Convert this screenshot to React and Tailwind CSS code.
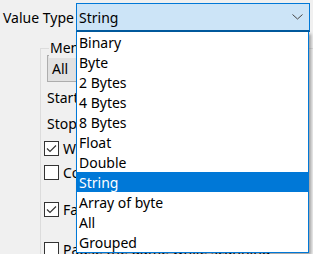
import { useState } from 'react'

const valueTypes = [
  'Binary',
  'Byte',
  '2 Bytes',
  '4 Bytes',
  '8 Bytes',
  'Float',
  'Double',
  'String',
  'Array of byte',
  'All',
  'Grouped',
]

function Check({ checked, label, className = '' }) {
  return (
    <div className={`flex items-center h-[15px] ml-[-3px] ${className}`}>
      <div className="w-[15px] h-[15px] shrink-0 border border-[#333333] bg-white flex items-center justify-center">
        {checked && (
          <svg width="13" height="13" viewBox="0 0 13 13">
            <polyline points="2,6.5 5,9.5 11,3.5" fill="none" stroke="#333333" strokeWidth="1.2" />
          </svg>
        )}
      </div>
      <span className="ml-[4px] whitespace-nowrap leading-[20px]">{label}</span>
    </div>
  )
}

export default function App() {
  const [selected] = useState('String')

  return (
    <div
      className="relative w-[313px] h-[254px] overflow-hidden bg-[#f0f0f0] text-[14px] text-black"
      style={{ fontFamily: '"Noto Sans", "Liberation Sans", sans-serif' }}
    >
      <div className="flex items-center pt-[3px] pl-[3px]">
        <span className="w-[73px] whitespace-nowrap">Value Type</span>
        <div className="w-[234px] h-[29px] flex items-center bg-[#cce4f7] border border-[#0078d7] border-b-2 border-b-[#005a9e] pl-[2px]">
          <span>{selected}</span>
          <svg className="ml-auto mr-[6px]" width="11" height="6" viewBox="0 0 11 6">
            <polyline points="0.5,0.5 5.5,5 10.5,0.5" fill="none" stroke="#444444" strokeWidth="1" />
          </svg>
        </div>
      </div>

      <div className="relative mt-[16px] ml-[40px] w-[400px] h-[260px] border-t border-l border-[#dcdcdc]">
        <span className="absolute left-[8px] -top-[11px] px-[1px] bg-[#f0f0f0] leading-[20px] whitespace-nowrap">
          Memory Scan Options
        </span>
        <div className="pt-[6px] pl-[6px]">
          <div className="w-[140px] h-[27px] flex items-center pl-[4px] bg-[#e1e1e1] border border-[#adadad]">
            All
          </div>
          <div className="mt-[6px] h-[20px] leading-[20px]">Start</div>
          <div className="mt-[6px] h-[20px] leading-[20px]">Stop</div>
          <Check checked label="Writable" className="mt-[7px]" />
          <Check label="CopyOnWrite" className="mt-[9px]" />
          <Check checked label="Fast Scan" className="mt-[22px]" />
          <Check label="Pause the game while scanning" className="mt-[25px]" />
        </div>
      </div>

      <div className="absolute left-[76px] top-[32px] w-[233px] h-[221px] bg-white border border-t-0 border-[#0078d7] shadow-[2px_2px_3px_rgba(0,0,0,0.35)]">
        {valueTypes.map(t => (
          <div
            key={t}
            className={`h-[20px] leading-[22px] pl-[2px] whitespace-nowrap ${
              t === selected ? 'bg-[#0078d7] text-white' : ''
            }`}
          >
            {t}
          </div>
        ))}
      </div>
    </div>
  )
}
